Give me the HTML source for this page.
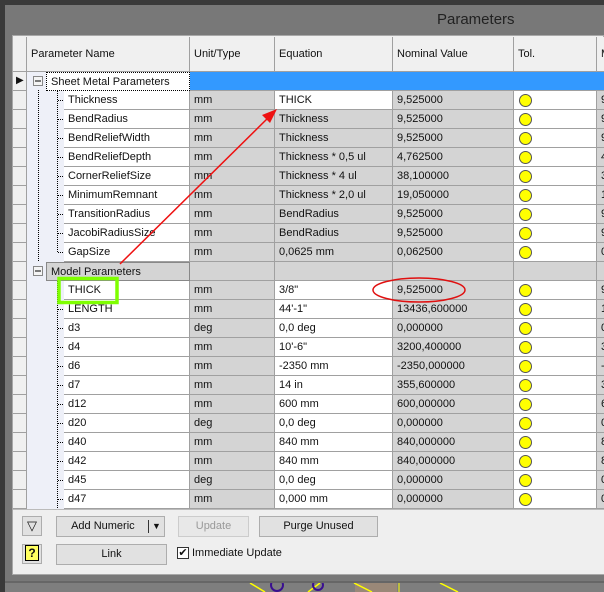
<!DOCTYPE html>
<html><head><meta charset="utf-8"><style>
*{margin:0;padding:0;box-sizing:border-box}
body{width:604px;height:592px;overflow:hidden;background:#7e7e7e;font-family:"Liberation Sans",Tahoma,sans-serif;font-size:11px;color:#111;position:relative}
.a{position:absolute}
.r{position:absolute;left:13px;width:600px;height:19px}
.r>div{position:absolute;top:0;height:19px;line-height:18px;padding-left:4px;border-right:1px solid #a0a0a0;border-bottom:1px solid #a0a0a0;white-space:nowrap;overflow:hidden}
.h{left:0;width:14px;background:#f0f0f0}
.t{left:14px;width:37px;background:#eef0f8;border:none!important}
.n{left:51px;width:126px;background:#fff}
.u{left:177px;width:85px;background:#d4d4d4}
.e{left:262px;width:118px;background:#d4d4d4}
.w{background:#fff!important}
.v{left:380px;width:121px;background:#d4d4d4}
.o{left:501px;width:83px;background:#fff}
.x{left:584px;width:20px;background:#d4d4d4}
.dot{position:absolute;left:5px;top:3px;width:13px;height:13px;border-radius:50%;background:#ffff00;border:1px solid #555}
.btn{position:absolute;height:21px;border:1px solid #adadad;background:#e1e1e1;text-align:center;line-height:19px;font-size:11px}
</style></head><body>
<div class="a" style="left:0;top:0;width:604px;height:5px;background:#3a3a3a"></div>
<div class="a" style="left:0;top:0;width:5px;height:592px;background:#3a3a3a"></div>
<div class="a" style="left:5px;top:5px;width:599px;height:578px;background:#787878;border-bottom:2px solid #666"></div>
<div class="a" style="left:437px;top:11px;font-size:15px;color:#222">Parameters</div>
<div class="a" style="left:12px;top:35px;width:592px;height:540px;background:#f0f0f0;border:1px solid #a8a8a8"></div>
<!-- header -->
<div class="r" style="top:37px;height:35px">
<div class="h" style="height:35px"></div>
<div style="left:14px;width:163px;height:35px;background:#f0f0f0;line-height:34px">Parameter Name</div>
<div style="left:177px;width:85px;height:35px;background:#f0f0f0;line-height:34px">Unit/Type</div>
<div style="left:262px;width:118px;height:35px;background:#f0f0f0;line-height:34px">Equation</div>
<div style="left:380px;width:121px;height:35px;background:#f0f0f0;line-height:34px">Nominal Value</div>
<div style="left:501px;width:83px;height:35px;background:#f0f0f0;line-height:34px">Tol.</div>
<div style="left:584px;width:20px;height:35px;background:#f0f0f0;line-height:34px">M</div>
</div>
<!-- sheet metal group -->
<div class="r" style="top:72px">
<div class="h" style="font-size:10px;padding-left:3px">&#9654;</div>
<div class="t"></div>
<div style="left:33px;width:144px;background:#fff;border:1px dotted #000">Sheet Metal Parameters</div>
<div style="left:177px;width:427px;background:#3399ff;border-right:none"></div>
</div>
<div class="r" style="top:91px"><div class="h"></div><div class="t"></div><div class="n">Thickness</div><div class="u">mm</div><div class="e w">THICK</div><div class="v">9,525000</div><div class="o"><span class="dot"></span></div><div class="x">9</div></div>
<div class="r" style="top:110px"><div class="h"></div><div class="t"></div><div class="n">BendRadius</div><div class="u">mm</div><div class="e">Thickness</div><div class="v">9,525000</div><div class="o"><span class="dot"></span></div><div class="x">9</div></div>
<div class="r" style="top:129px"><div class="h"></div><div class="t"></div><div class="n">BendReliefWidth</div><div class="u">mm</div><div class="e">Thickness</div><div class="v">9,525000</div><div class="o"><span class="dot"></span></div><div class="x">9</div></div>
<div class="r" style="top:148px"><div class="h"></div><div class="t"></div><div class="n">BendReliefDepth</div><div class="u">mm</div><div class="e">Thickness * 0,5 ul</div><div class="v">4,762500</div><div class="o"><span class="dot"></span></div><div class="x">4</div></div>
<div class="r" style="top:167px"><div class="h"></div><div class="t"></div><div class="n">CornerReliefSize</div><div class="u">mm</div><div class="e">Thickness * 4 ul</div><div class="v">38,100000</div><div class="o"><span class="dot"></span></div><div class="x">3</div></div>
<div class="r" style="top:186px"><div class="h"></div><div class="t"></div><div class="n">MinimumRemnant</div><div class="u">mm</div><div class="e">Thickness * 2,0 ul</div><div class="v">19,050000</div><div class="o"><span class="dot"></span></div><div class="x">1</div></div>
<div class="r" style="top:205px"><div class="h"></div><div class="t"></div><div class="n">TransitionRadius</div><div class="u">mm</div><div class="e">BendRadius</div><div class="v">9,525000</div><div class="o"><span class="dot"></span></div><div class="x">9</div></div>
<div class="r" style="top:224px"><div class="h"></div><div class="t"></div><div class="n">JacobiRadiusSize</div><div class="u">mm</div><div class="e">BendRadius</div><div class="v">9,525000</div><div class="o"><span class="dot"></span></div><div class="x">9</div></div>
<div class="r" style="top:243px"><div class="h"></div><div class="t"></div><div class="n">GapSize</div><div class="u">mm</div><div class="e">0,0625 mm</div><div class="v">0,062500</div><div class="o"><span class="dot"></span></div><div class="x">0</div></div>
<!-- model group -->
<div class="r" style="top:262px">
<div class="h"></div><div class="t"></div>
<div style="left:33px;width:144px;background:#d4d4d4;border:1px solid #888">Model Parameters</div>
<div class="u" style="background:#d4d4d4"></div><div class="e"></div><div class="v"></div><div class="o" style="background:#d4d4d4"></div><div class="x"></div>
</div>
<div class="r" style="top:281px"><div class="h"></div><div class="t"></div><div class="n">THICK</div><div class="u">mm</div><div class="e w">3/8"</div><div class="v">9,525000</div><div class="o"><span class="dot"></span></div><div class="x">9</div></div>
<div class="r" style="top:300px"><div class="h"></div><div class="t"></div><div class="n">LENGTH</div><div class="u">mm</div><div class="e w">44'-1"</div><div class="v">13436,600000</div><div class="o"><span class="dot"></span></div><div class="x">1</div></div>
<div class="r" style="top:319px"><div class="h"></div><div class="t"></div><div class="n">d3</div><div class="u">deg</div><div class="e w">0,0 deg</div><div class="v">0,000000</div><div class="o"><span class="dot"></span></div><div class="x">0</div></div>
<div class="r" style="top:338px"><div class="h"></div><div class="t"></div><div class="n">d4</div><div class="u">mm</div><div class="e w">10'-6"</div><div class="v">3200,400000</div><div class="o"><span class="dot"></span></div><div class="x">3</div></div>
<div class="r" style="top:357px"><div class="h"></div><div class="t"></div><div class="n">d6</div><div class="u">mm</div><div class="e w">-2350 mm</div><div class="v">-2350,000000</div><div class="o"><span class="dot"></span></div><div class="x">-</div></div>
<div class="r" style="top:376px"><div class="h"></div><div class="t"></div><div class="n">d7</div><div class="u">mm</div><div class="e w">14 in</div><div class="v">355,600000</div><div class="o"><span class="dot"></span></div><div class="x">3</div></div>
<div class="r" style="top:395px"><div class="h"></div><div class="t"></div><div class="n">d12</div><div class="u">mm</div><div class="e w">600 mm</div><div class="v">600,000000</div><div class="o"><span class="dot"></span></div><div class="x">6</div></div>
<div class="r" style="top:414px"><div class="h"></div><div class="t"></div><div class="n">d20</div><div class="u">deg</div><div class="e w">0,0 deg</div><div class="v">0,000000</div><div class="o"><span class="dot"></span></div><div class="x">0</div></div>
<div class="r" style="top:433px"><div class="h"></div><div class="t"></div><div class="n">d40</div><div class="u">mm</div><div class="e w">840 mm</div><div class="v">840,000000</div><div class="o"><span class="dot"></span></div><div class="x">8</div></div>
<div class="r" style="top:452px"><div class="h"></div><div class="t"></div><div class="n">d42</div><div class="u">mm</div><div class="e w">840 mm</div><div class="v">840,000000</div><div class="o"><span class="dot"></span></div><div class="x">8</div></div>
<div class="r" style="top:471px"><div class="h"></div><div class="t"></div><div class="n">d45</div><div class="u">deg</div><div class="e w">0,0 deg</div><div class="v">0,000000</div><div class="o"><span class="dot"></span></div><div class="x">0</div></div>
<div class="r" style="top:490px"><div class="h"></div><div class="t"></div><div class="n">d47</div><div class="u">mm</div><div class="e w">0,000 mm</div><div class="v">0,000000</div><div class="o"><span class="dot"></span></div><div class="x">0</div></div>
<!-- tree lines -->
<svg class="a" style="left:0;top:0" width="604" height="592">
<g stroke="#000" stroke-dasharray="1,1" stroke-width="1" fill="none">
<line x1="38.5" y1="90" x2="38.5" y2="262"/>
<line x1="57.5" y1="91" x2="57.5" y2="252"/>
<line x1="57.5" y1="281" x2="57.5" y2="510"/>
</g>
<g stroke="#000" stroke-dasharray="1,1">
<line x1="58" y1="100.5" x2="64" y2="100.5"/><line x1="58" y1="119.5" x2="64" y2="119.5"/><line x1="58" y1="138.5" x2="64" y2="138.5"/><line x1="58" y1="157.5" x2="64" y2="157.5"/><line x1="58" y1="176.5" x2="64" y2="176.5"/><line x1="58" y1="195.5" x2="64" y2="195.5"/><line x1="58" y1="214.5" x2="64" y2="214.5"/><line x1="58" y1="233.5" x2="64" y2="233.5"/><line x1="58" y1="252.5" x2="64" y2="252.5"/>
<line x1="58" y1="309.5" x2="64" y2="309.5"/><line x1="58" y1="328.5" x2="64" y2="328.5"/><line x1="58" y1="347.5" x2="64" y2="347.5"/><line x1="58" y1="366.5" x2="64" y2="366.5"/><line x1="58" y1="385.5" x2="64" y2="385.5"/><line x1="58" y1="404.5" x2="64" y2="404.5"/><line x1="58" y1="423.5" x2="64" y2="423.5"/><line x1="58" y1="442.5" x2="64" y2="442.5"/><line x1="58" y1="461.5" x2="64" y2="461.5"/><line x1="58" y1="480.5" x2="64" y2="480.5"/><line x1="58" y1="499.5" x2="64" y2="499.5"/>
</g>
<rect x="33.5" y="76.5" width="9" height="9" fill="#f4f4f4" stroke="#888"/><line x1="35" y1="81" x2="41" y2="81" stroke="#000"/>
<rect x="33.5" y="266.5" width="9" height="9" fill="#f4f4f4" stroke="#888"/><line x1="35" y1="271" x2="41" y2="271" stroke="#000"/>
<!-- annotations -->
<line x1="120" y1="264" x2="272" y2="114" stroke="#ee1111" stroke-width="1.5"/>
<polygon points="277,109 262,115 270,123" fill="#ee1111"/>
<rect x="59" y="278.5" width="58" height="24" fill="none" stroke="#7fff00" stroke-width="3.5"/>
<ellipse cx="419" cy="290" rx="46" ry="12" fill="none" stroke="#e01010" stroke-width="1.5"/>
</svg>
<!-- bottom panel -->
<div class="a" style="left:13px;top:509px;width:591px;height:65px;background:#efefef;border-top:1px solid #bbb"></div>
<div class="btn" style="left:22px;top:516px;width:20px;height:20px;line-height:17px;font-size:13px">&#9661;</div>
<div class="btn" style="left:56px;top:516px;width:109px">Add Numeric&nbsp;&nbsp;&nbsp;&nbsp;&nbsp;<span style="position:absolute;left:91px;top:3px;height:13px;border-left:1px solid #333"></span><span style="position:absolute;left:95px;top:0;font-size:9px">&#9660;</span></div>
<div class="btn" style="left:178px;top:516px;width:71px;color:#999;border-color:#ccc;background:#e8e8e8">Update</div>
<div class="btn" style="left:259px;top:516px;width:119px">Purge Unused</div>
<div class="btn" style="left:22px;top:544px;width:20px;height:20px;line-height:17px;font-weight:bold;font-size:12px"><span style="background:#ffff60;border:1px solid #000;padding:0 2px">?</span></div>
<div class="btn" style="left:56px;top:544px;width:111px">Link</div>
<div class="a" style="left:177px;top:547px;width:12px;height:12px;border:1px solid #333;background:#fff;font-size:11px;line-height:10px;text-align:center">&#10004;</div>
<div class="a" style="left:192px;top:547px">Immediate Update</div>
<!-- cad remnants -->
<svg class="a" style="left:0;top:583px" width="604" height="9">
<rect x="355" y="0" width="42" height="9" fill="#9a8878"/>
<path d="M250 0 L265 9 M354 0 L372 9 M440 0 L458 9 M320 0 L308 9" stroke="#ffff00" stroke-width="1.5"/>
<circle cx="277" cy="2" r="6" fill="none" stroke="#3a1090" stroke-width="2"/>
<circle cx="318" cy="2" r="5" fill="none" stroke="#3a1090" stroke-width="2"/>
<line x1="399" y1="0" x2="399" y2="9" stroke="#ffff00"/>
</svg>
</body></html>
